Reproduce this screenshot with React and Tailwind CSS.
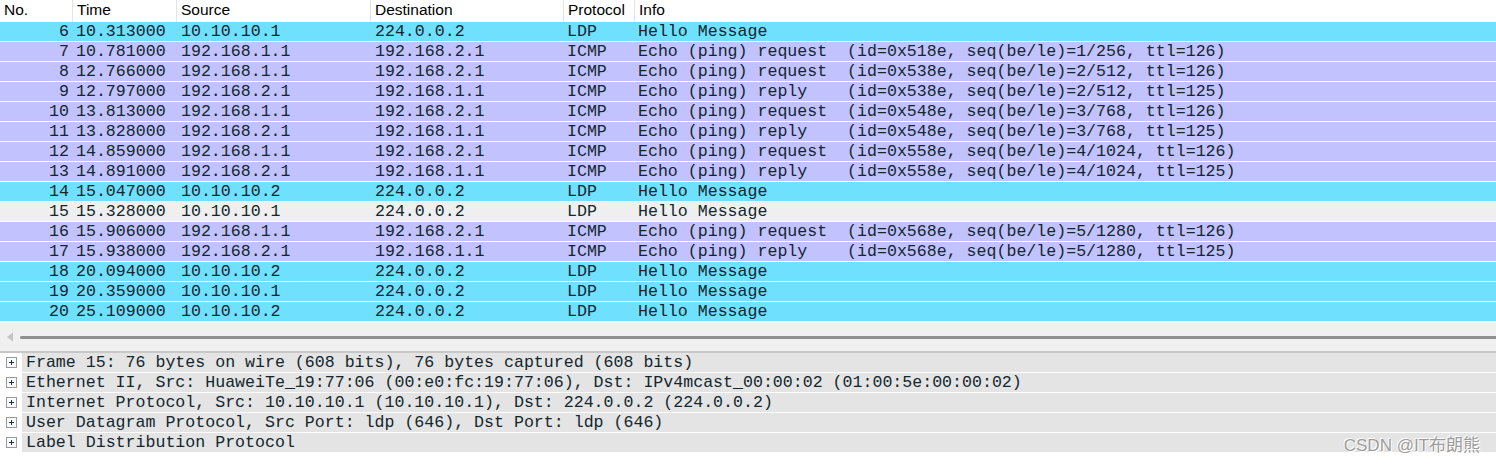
import React from 'react';

const CYAN = 'bg-[#70e0ff]';
const ICMP = 'bg-[#c2c2ff]';
const SEL = 'bg-[#efefef]';

const packets = [
  ['6', '10.313000', '10.10.10.1', '224.0.0.2', 'LDP', 'Hello Message', CYAN],
  ['7', '10.781000', '192.168.1.1', '192.168.2.1', 'ICMP', 'Echo (ping) request  (id=0x518e, seq(be/le)=1/256, ttl=126)', ICMP],
  ['8', '12.766000', '192.168.1.1', '192.168.2.1', 'ICMP', 'Echo (ping) request  (id=0x538e, seq(be/le)=2/512, ttl=126)', ICMP],
  ['9', '12.797000', '192.168.2.1', '192.168.1.1', 'ICMP', 'Echo (ping) reply    (id=0x538e, seq(be/le)=2/512, ttl=125)', ICMP],
  ['10', '13.813000', '192.168.1.1', '192.168.2.1', 'ICMP', 'Echo (ping) request  (id=0x548e, seq(be/le)=3/768, ttl=126)', ICMP],
  ['11', '13.828000', '192.168.2.1', '192.168.1.1', 'ICMP', 'Echo (ping) reply    (id=0x548e, seq(be/le)=3/768, ttl=125)', ICMP],
  ['12', '14.859000', '192.168.1.1', '192.168.2.1', 'ICMP', 'Echo (ping) request  (id=0x558e, seq(be/le)=4/1024, ttl=126)', ICMP],
  ['13', '14.891000', '192.168.2.1', '192.168.1.1', 'ICMP', 'Echo (ping) reply    (id=0x558e, seq(be/le)=4/1024, ttl=125)', ICMP],
  ['14', '15.047000', '10.10.10.2', '224.0.0.2', 'LDP', 'Hello Message', CYAN],
  ['15', '15.328000', '10.10.10.1', '224.0.0.2', 'LDP', 'Hello Message', SEL],
  ['16', '15.906000', '192.168.1.1', '192.168.2.1', 'ICMP', 'Echo (ping) request  (id=0x568e, seq(be/le)=5/1280, ttl=126)', ICMP],
  ['17', '15.938000', '192.168.2.1', '192.168.1.1', 'ICMP', 'Echo (ping) reply    (id=0x568e, seq(be/le)=5/1280, ttl=125)', ICMP],
  ['18', '20.094000', '10.10.10.2', '224.0.0.2', 'LDP', 'Hello Message', CYAN],
  ['19', '20.359000', '10.10.10.1', '224.0.0.2', 'LDP', 'Hello Message', CYAN],
  ['20', '25.109000', '10.10.10.2', '224.0.0.2', 'LDP', 'Hello Message', CYAN],
];

const details = [
  'Frame 15: 76 bytes on wire (608 bits), 76 bytes captured (608 bits)',
  'Ethernet II, Src: HuaweiTe_19:77:06 (00:e0:fc:19:77:06), Dst: IPv4mcast_00:00:02 (01:00:5e:00:00:02)',
  'Internet Protocol, Src: 10.10.10.1 (10.10.10.1), Dst: 224.0.0.2 (224.0.0.2)',
  'User Datagram Protocol, Src Port: ldp (646), Dst Port: ldp (646)',
  'Label Distribution Protocol',
];

const cols = 'grid grid-cols-[73px_104px_194px_193px_71px_1fr]';
const mono = { fontFamily: '"Liberation Mono", monospace' };

function PlusBox() {
  return (
    <svg width="11" height="11" viewBox="0 0 11 11">
      <rect x="0.5" y="0.5" width="10" height="10" fill="#fafafa" stroke="#9a9a9a" />
      <path d="M3 5.5h5M5.5 3v5" stroke="#1c2a55" strokeWidth="1" />
    </svg>
  );
}

export default function App() {
  return (
    <div className="relative w-[1496px] h-[466px] bg-white overflow-hidden text-[#12272e]">
      {/* column headers */}
      <div className={`${cols} h-[22px] bg-white text-[15.5px] text-black`} style={{ fontFamily: '"Liberation Sans", Arial, sans-serif' }}>
        {['No.', 'Time', 'Source', 'Destination', 'Protocol', 'Info'].map((h, i) => (
          <div key={h} className={`pl-[4px] leading-[19px] ${i < 5 ? 'border-r border-[#e3e3e3]' : ''}`}>{h}</div>
        ))}
      </div>

      {/* packet list */}
      <div className="text-[16.6px]" style={mono}>
        {packets.map(([no, t, src, dst, proto, info, bg]) => (
          <div key={no} className={`${cols} h-[20px] border-b border-white ${bg} leading-[19px] whitespace-pre`}>
            <div className="pr-[4px] text-right">{no}</div>
            <div className="pl-[3px]">{t}</div>
            <div className="pl-[4px]">{src}</div>
            <div className="pl-[4px]">{dst}</div>
            <div className="pl-[3px]">{proto}</div>
            <div className="pl-[3px]">{info}</div>
          </div>
        ))}
      </div>

      {/* horizontal scrollbar */}
      <div className="mt-[1px] h-[30px] bg-[#f0f0f0] border-b-2 border-[#c8c8c8] flex items-center pl-[6px] pr-0 gap-[6px]">
        <svg width="8" height="10" viewBox="0 0 8 10" className="shrink-0">
          <path d="M7 0.5v9L1 5z" fill="#c4c4c4" />
        </svg>
        <div className="flex-1 h-[3px] bg-[#8f8f8f] rounded-l-full" />
      </div>

      {/* packet details */}
      <div className="text-[16.6px]" style={mono}>
        {details.map((d) => (
          <div key={d} className="flex h-[20px] border-b border-white">
            <div className="w-[22px] shrink-0 bg-white flex items-center pl-[6px]">
              <PlusBox />
            </div>
            <div className="flex-1 bg-[#e4e4e4] pl-[4px] leading-[19px] whitespace-pre">{d}</div>
          </div>
        ))}
      </div>

      <div
        className="absolute right-[16px] bottom-[8px] text-[17px] text-[#9c9c9c]"
        style={{ fontFamily: '"Liberation Sans", "Noto Sans CJK SC", sans-serif', textShadow: '1px 1px 0 #fff, -1px -1px 0 #fff' }}
      >
        CSDN @IT布朗熊
      </div>
    </div>
  );
}
